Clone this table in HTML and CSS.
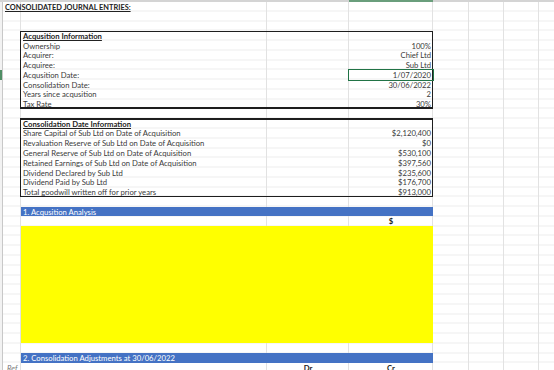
FILE: index.html
```html
<!DOCTYPE html>
<html>
<head>
<meta charset="utf-8">
<link rel="stylesheet" href="styles.css">
</head>
<body>
<div class="sheet">
  <div class="hdr"></div>
  <div class="hdr-sel"></div>
  <div class="rowhdr"></div>
  <div class="rowhdr-sel"></div>

  <div class="cell title r1">CONSOLIDATED JOURNAL ENTRIES:</div>

  <div class="box box1"></div>
  <div class="cell lbl head r4">Acqusition Information</div>
  <div class="cell lbl r5">Ownership</div><div class="cell val r5">100%</div>
  <div class="cell lbl r6">Acquirer:</div><div class="cell val r6">Chief Ltd</div>
  <div class="cell lbl r7">Acquiree:</div><div class="cell val r7">Sub Ltd</div>
  <div class="cell lbl r8">Acqusition Date:</div><div class="cell val r8">1/07/2020</div>
  <div class="selcell"></div>
  <div class="cell lbl r9">Consolidation Date:</div><div class="cell val r9">30/06/2022</div>
  <div class="cell lbl r10">Years since acqusition</div><div class="cell val r10">2</div>
  <div class="cell lbl r11">Tax Rate</div><div class="cell val r11">30%</div>

  <div class="box box2"></div>
  <div class="cell lbl head r13">Consolidation Date Information</div>
  <div class="cell lbl r14">Share Capital of Sub Ltd on Date of Acquisition</div><div class="cell val r14">$2,120,400</div>
  <div class="cell lbl r15">Revaluation Reserve of Sub Ltd on Date of Acquisition</div><div class="cell val r15">$0</div>
  <div class="cell lbl r16">General Reserve of Sub Ltd on Date of Acquisition</div><div class="cell val r16">$530,100</div>
  <div class="cell lbl r17">Retained Earnings of Sub Ltd on Date of Acquisition</div><div class="cell val r17">$397,560</div>
  <div class="cell lbl r18">Dividend Declared by Sub Ltd</div><div class="cell val r18">$235,600</div>
  <div class="cell lbl r19">Dividend Paid by Sub Ltd</div><div class="cell val r19">$176,700</div>
  <div class="cell lbl r20">Total goodwill written off for prior years</div><div class="cell val r20">$913,000</div>

  <div class="cell band r22">1. Acqusition Analysis</div>
  <div class="cell ctr bold r23 colD">$</div>
  <div class="fill-yellow"></div>
  <div class="cell band r37">2. Consolidation Adjustments at 30/06/2022</div>
  <div class="cell ref r38">Ref</div>
  <div class="cell ctr bold r38 colC">Dr</div>
  <div class="cell ctr bold r38 colD">Cr</div>
</div>
</body>
</html>
```
FILE: styles.css
```css
html, body { margin: 0; padding: 0; background: #fff; }
body { width: 554px; height: 370px; overflow: hidden; }

.sheet {
  display: grid;
  grid-template-columns: 3px 18px 246px 82px 84px 36px 35px 35px 1fr;
  grid-template-rows: 1.5px repeat(38, 9.77px);
  font-family: "Lato", "Open Sans", sans-serif;
  font-size: 7.7px;
  color: #3a3a3a;
  background-image:
    linear-gradient(#e2e2e2, #e2e2e2),
    linear-gradient(#e2e2e2, #e2e2e2),
    linear-gradient(#e2e2e2, #e2e2e2),
    linear-gradient(#e2e2e2, #e2e2e2),
    linear-gradient(#e2e2e2, #e2e2e2),
    linear-gradient(#e2e2e2, #e2e2e2),
    linear-gradient(#e2e2e2, #e2e2e2),
    repeating-linear-gradient(to bottom, transparent 0, transparent 8.77px, #ececec 8.77px, #ececec 9.77px);
  background-size: 1px 100%, 1px 100%, 1px 100%, 1px 100%, 1px 100%, 1px 100%, 1px 100%, 100% 100%;
  background-position: 20px 0, 266px 0, 348px 0, 432px 0, 468px 0, 503px 0, 538px 0, 0 1.5px;
  background-repeat: no-repeat, no-repeat, no-repeat, no-repeat, no-repeat, no-repeat, no-repeat, repeat;
  height: 370px;
}

.hdr { grid-row: 1; grid-column: 1 / -1; background: #d4d4d4; }
.hdr-sel { grid-row: 1; grid-column: 5; background: #6a9e7c; }
.rowhdr { grid-row: 2 / -1; grid-column: 1; background: #f2f2f2; border-right: 1px solid #c8c8c8; }
.rowhdr-sel { grid-row: 9; grid-column: 1; background: #4f8e65; margin-right: 1px; }

.cell {
  white-space: nowrap;
  line-height: 9.77px;
  padding-top: 1px;
  height: 9.77px;
  box-sizing: border-box;
  z-index: 2;
}
.r1 { grid-row: 2; } .r4 { grid-row: 5; } .r5 { grid-row: 6; } .r6 { grid-row: 7; }
.r7 { grid-row: 8; } .r8 { grid-row: 9; } .r9 { grid-row: 10; } .r10 { grid-row: 11; }
.r11 { grid-row: 12; } .r13 { grid-row: 14; } .r14 { grid-row: 15; } .r15 { grid-row: 16; }
.r16 { grid-row: 17; } .r17 { grid-row: 18; } .r18 { grid-row: 19; } .r19 { grid-row: 20; }
.r20 { grid-row: 21; } .r22 { grid-row: 23; } .r23 { grid-row: 24; } .r37 { grid-row: 38; }
.r38 { grid-row: 39; }

.title {
  grid-column: 2 / 5;
  padding-left: 2px;
  font-weight: 700;
  text-decoration: underline;
  color: #222;
  font-size: 7.4px;
}
.lbl { grid-column: 3 / 5; padding-left: 2px; }
.lbl.head { font-weight: 700; text-decoration: underline; color: #222; }
.val { grid-column: 5; text-align: right; padding-right: 2px; }
.colC { grid-column: 4; }
.colD { grid-column: 5; }
.ctr { text-align: center; }
.bold { font-weight: 700; color: #222; }
.ref { grid-column: 2; padding-left: 4px; font-style: italic; color: #777; }

.box {
  grid-column: 3 / 6;
  border: 1px solid #1e1e1e;
  z-index: 3;
  margin-left: -1px;
}
.box1 { grid-row: 5 / 13; border-bottom-width: 2px; }
.box2 { grid-row: 14 / 22; border-top-width: 2px; margin-top: -1px; }

.selcell {
  grid-row: 9; grid-column: 5;
  border: 1.5px solid #217346;
  margin: -1px -1px -1px -1px;
  z-index: 4;
}

.band {
  grid-column: 3 / 6;
  background: #4472c4;
  color: #fff;
  padding-left: 2px;
}
.fill-yellow {
  grid-row: 25 / 37;
  grid-column: 3 / 6;
  background: #ffff00;
  z-index: 1;
}
```
